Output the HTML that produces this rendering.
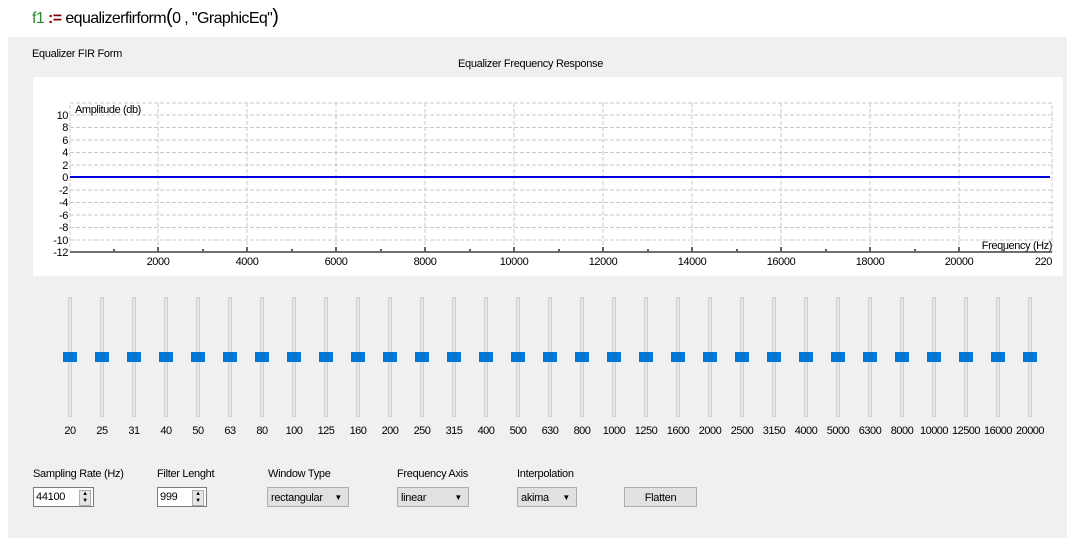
<!DOCTYPE html>
<html><head><style>
body{margin:0;width:1079px;height:538px;background:#fff;font-family:"Liberation Sans",sans-serif;position:relative;overflow:hidden;font-size:11px;color:#000;letter-spacing:-0.3px}
.a{position:absolute}
.panel{left:8px;top:37px;width:1059px;height:501px;background:#f0f0f0}
.track{width:4px;height:120px;background:#e6e6e6;border:1px solid #d0d0d0;box-sizing:border-box;top:297px}
.handle{width:14px;height:10px;background:#0078d7;top:352px}
.lab{top:425px;width:40px;text-align:center;font-size:11px;letter-spacing:-0.5px}
.inp{background:#fff;border:1px solid #7a7a7a;height:20px;box-sizing:border-box;top:487px;font-size:11px;line-height:18px;padding-left:2px}
.sp{position:absolute;right:2px;top:2px;width:10px;height:14px;border:1px solid #adadad;background:#e5e5e5;font-size:6px;line-height:7px;text-align:center}
.dd{background:#e1e1e1;border:1px solid #adadad;height:20px;box-sizing:border-box;top:487px;line-height:20px;padding-left:3px}
.dd span{position:absolute;right:6px;font-size:8px}
</style></head><body>
<div class="a" style="left:32px;top:6px;font-size:16px;letter-spacing:-0.6px"><span style="color:#2a8a2a">f1</span> <b style="color:#8b0000">:=</b> equalizerfirform<span style="font-size:20px">(</span>0 , "GraphicEq"<span style="font-size:20px">)</span></div>
<div class="a panel"></div>
<div class="a" style="left:32px;top:48px">Equalizer FIR Form</div>
<div class="a" style="left:458px;top:58px">Equalizer Frequency Response</div>
<div class="a" style="left:33px;top:77px;width:1030px;height:199px;background:#fff"></div>
<svg class="a" style="left:0;top:0" width="1079" height="300">
<g stroke="#c8c8c8" stroke-dasharray="4,2" fill="none">
<rect x="70" y="103" width="982" height="149"/>
<line x1="70" x2="1052" y1="115" y2="115"/><line x1="70" x2="1052" y1="127.5" y2="127.5"/><line x1="70" x2="1052" y1="140" y2="140"/><line x1="70" x2="1052" y1="152.5" y2="152.5"/><line x1="70" x2="1052" y1="165" y2="165"/><line x1="70" x2="1052" y1="190" y2="190"/><line x1="70" x2="1052" y1="202.5" y2="202.5"/><line x1="70" x2="1052" y1="215" y2="215"/><line x1="70" x2="1052" y1="227.5" y2="227.5"/><line x1="70" x2="1052" y1="240" y2="240"/>
<line y1="103" y2="252" x1="158" x2="158"/><line y1="103" y2="252" x1="247" x2="247"/><line y1="103" y2="252" x1="336" x2="336"/><line y1="103" y2="252" x1="425" x2="425"/><line y1="103" y2="252" x1="514" x2="514"/><line y1="103" y2="252" x1="603" x2="603"/><line y1="103" y2="252" x1="692" x2="692"/><line y1="103" y2="252" x1="781" x2="781"/><line y1="103" y2="252" x1="870" x2="870"/><line y1="103" y2="252" x1="959" x2="959"/>
</g>
<line x1="70" x2="1050" y1="177" y2="177" stroke="#0000e0" stroke-width="2"/>
<line x1="70" x2="1052" y1="252" y2="252" stroke="#707070" stroke-width="2"/>
<g stroke="#606060" stroke-width="2"><line x1="114" x2="114" y1="249" y2="252"/><line x1="158" x2="158" y1="247" y2="252"/><line x1="203" x2="203" y1="249" y2="252"/><line x1="247" x2="247" y1="247" y2="252"/><line x1="292" x2="292" y1="249" y2="252"/><line x1="336" x2="336" y1="247" y2="252"/><line x1="381" x2="381" y1="249" y2="252"/><line x1="425" x2="425" y1="247" y2="252"/><line x1="470" x2="470" y1="249" y2="252"/><line x1="514" x2="514" y1="247" y2="252"/><line x1="559" x2="559" y1="249" y2="252"/><line x1="603" x2="603" y1="247" y2="252"/><line x1="648" x2="648" y1="249" y2="252"/><line x1="692" x2="692" y1="247" y2="252"/><line x1="737" x2="737" y1="249" y2="252"/><line x1="781" x2="781" y1="247" y2="252"/><line x1="826" x2="826" y1="249" y2="252"/><line x1="870" x2="870" y1="247" y2="252"/><line x1="915" x2="915" y1="249" y2="252"/><line x1="959" x2="959" y1="247" y2="252"/><line x1="1004" x2="1004" y1="249" y2="252"/></g>
<g font-family="Liberation Sans" font-size="11" text-anchor="end" letter-spacing="-0.4">
<text x="68" y="119">10</text><text x="68" y="131">8</text><text x="68" y="144">6</text><text x="68" y="156">4</text><text x="68" y="169">2</text><text x="68" y="181">0</text><text x="68" y="194">-2</text><text x="68" y="206">-4</text><text x="68" y="219">-6</text><text x="68" y="231">-8</text><text x="68" y="244">-10</text><text x="68" y="256">-12</text>
</g>
<g font-family="Liberation Sans" font-size="11" text-anchor="middle" letter-spacing="-0.4">
<text x="158" y="265">2000</text><text x="247" y="265">4000</text><text x="336" y="265">6000</text><text x="425" y="265">8000</text><text x="514" y="265">10000</text><text x="603" y="265">12000</text><text x="692" y="265">14000</text><text x="781" y="265">16000</text><text x="870" y="265">18000</text><text x="959" y="265">20000</text><text x="1052" y="265" text-anchor="end">220</text>
</g>
<text x="75" y="113" font-family="Liberation Sans" font-size="11" letter-spacing="-0.4">Amplitude (db)</text>
<text x="1052" y="249" font-family="Liberation Sans" font-size="11" text-anchor="end" letter-spacing="-0.4">Frequency (Hz)</text>
</svg>
<div id="sl"></div>
<script>
var l=["20","25","31","40","50","63","80","100","125","160","200","250","315","400","500","630","800","1000","1250","1600","2000","2500","3150","4000","5000","6300","8000","10000","12500","16000","20000"],h="";
for(var i=0;i<31;i++){var x=70+32*i;h+='<div class="a track" style="left:'+(x-2)+'px"></div><div class="a handle" style="left:'+(x-7)+'px"></div><div class="a lab" style="left:'+(x-20)+'px">'+l[i]+'</div>';}
document.getElementById("sl").innerHTML=h;
</script>
<div class="a" style="left:33px;top:468px">Sampling Rate (Hz)</div>
<div class="a" style="left:157px;top:468px">Filter Lenght</div>
<div class="a" style="left:268px;top:468px">Window Type</div>
<div class="a" style="left:397px;top:468px">Frequency Axis</div>
<div class="a" style="left:517px;top:468px">Interpolation</div>
<div class="a inp" style="left:33px;width:61px">44100<div class="sp">▲<br>▼</div></div>
<div class="a inp" style="left:157px;width:50px">999<div class="sp">▲<br>▼</div></div>
<div class="a dd" style="left:267px;width:82px">rectangular<span>▼</span></div>
<div class="a dd" style="left:397px;width:72px">linear<span>▼</span></div>
<div class="a dd" style="left:517px;width:60px">akima<span>▼</span></div>
<div class="a dd" style="left:624px;width:73px;text-align:center;padding:0">Flatten</div>
</body></html>
